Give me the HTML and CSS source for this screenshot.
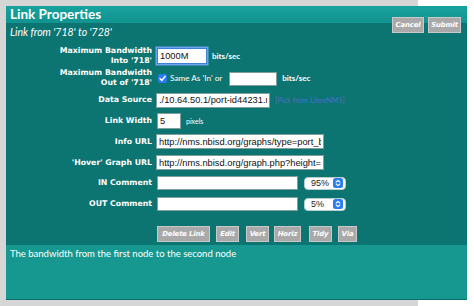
FILE: index.html
```html
<!DOCTYPE html>
<html>
<head>
<meta charset="utf-8">
<link rel="stylesheet" href="styles.css">
</head>
<body>
<div class="backdrop">
  <div class="panel">
    <div class="header">
      <h1 class="title">Link Properties</h1>
      <div class="actions">
        <span class="btn btn-cancel">Cancel</span>
        <span class="btn btn-submit">Submit</span>
      </div>
    </div>
    <div class="body">
      <div class="subtitle">Link from '718' to '728'</div>
      <div class="form">
        <div class="lbl">Maximum Bandwidth<br>Into '718'</div>
        <div class="field"><input class="inp inp-bw focus" type="text" value="1000M"><span class="unit">bits/sec</span></div>

        <div class="lbl">Maximum Bandwidth<br>Out of '718'</div>
        <div class="field">
          <svg class="check" width="9" height="9" viewBox="0 0 9 9"><rect x="0" y="0" width="9" height="9" rx="2" fill="#2a7bf0"/><path d="M2 4.6 L3.8 6.5 L7.2 2.3" fill="none" stroke="#fff" stroke-width="1.4" stroke-linecap="round" stroke-linejoin="round"/></svg>
          <span class="same">Same As 'In' or</span>
          <input class="inp inp-out" type="text" value="">
          <span class="unit">bits/sec</span>
        </div>

        <div class="lbl">Data Source</div>
        <div class="field"><input class="inp inp-ds" type="text" value="./10.64.50.1/port-id44231.rrd"><span class="pick">[Pick from LibreNMS]</span></div>

        <div class="lbl">Link Width</div>
        <div class="field"><input class="inp inp-lw" type="text" value="5"><span class="px">pixels</span></div>

        <div class="lbl">Info URL</div>
        <div class="field"><input class="inp inp-url" type="text" value="http://nms.nbisd.org/graphs/type=port_bits/id=44231/"></div>

        <div class="lbl">'Hover' Graph URL</div>
        <div class="field"><input class="inp inp-url" type="text" value="http://nms.nbisd.org/graph.php?height=100&amp;width=512"></div>

        <div class="lbl">IN Comment</div>
        <div class="field"><input class="inp inp-cm" type="text" value=""><span class="sel"><span class="sel-txt">95%</span><svg class="step" width="10" height="10" viewBox="0 0 10 10"><rect width="10" height="10" rx="2.5" fill="#2b7cf2"/><path d="M3.2 4 L5 2.3 L6.8 4 M3.2 6 L5 7.7 L6.8 6" fill="none" stroke="#fff" stroke-width="1.1" stroke-linecap="round" stroke-linejoin="round"/></svg></span></div>

        <div class="lbl">OUT Comment</div>
        <div class="field"><input class="inp inp-cm" type="text" value=""><span class="sel"><span class="sel-txt">5%</span><svg class="step" width="10" height="10" viewBox="0 0 10 10"><rect width="10" height="10" rx="2.5" fill="#2b7cf2"/><path d="M3.2 4 L5 2.3 L6.8 4 M3.2 6 L5 7.7 L6.8 6" fill="none" stroke="#fff" stroke-width="1.1" stroke-linecap="round" stroke-linejoin="round"/></svg></span></div>
      </div>
      <div class="buttons">
        <span class="btn b-del">Delete Link</span>
        <span class="btn b-edit">Edit</span>
        <span class="btn b-vert">Vert</span>
        <span class="btn b-horiz">Horiz</span>
        <span class="btn b-tidy">Tidy</span>
        <span class="btn b-via">Via</span>
      </div>
    </div>
    <div class="help">The bandwidth from the first node to the second node</div>
  </div>
</div>
</body>
</html>
```

FILE: styles.css
```css
html, body {
  margin: 0;
  padding: 0;
  background: #ffffff;
}
.backdrop {
  width: 418px;
  height: 306px;
  box-sizing: border-box;
  padding: 6px 0 0 6px;
  background: #d6d6d6;
}
.panel {
  width: 461px;
  background: #0c7471;
  color: #fff;
  font-family: Lato, "Liberation Sans", sans-serif;
}
.header {
  height: 17px;
  display: flex;
  justify-content: space-between;
  align-items: flex-start;
  padding: 0 6px 0 4px;
  background: linear-gradient(#17a29e, #11938f);
}
.title {
  margin: 0;
  font-size: 13.5px;
  line-height: 17px;
  font-weight: 700;
  font-family: Lato, "Liberation Sans", sans-serif;
}
.actions {
  display: flex;
  gap: 4px;
  margin-top: 11px;
}
.btn {
  display: inline-flex;
  align-items: center;
  justify-content: center;
  box-sizing: border-box;
  height: 16px;
  background: #a9a9a9;
  border: 1px solid #c9c9c9;
  color: #fff;
  font-family: "DejaVu Sans", sans-serif;
  font-weight: 700;
  font-style: oblique;
  font-size: 6.9px;
  letter-spacing: -0.15px;
}
.btn-cancel { width: 32px; }
.btn-submit { width: 33px; }
.body {
  padding: 3px 0 3px 0;
}
.subtitle {
  padding-left: 4px;
  font-style: italic;
  font-size: 10.5px;
  line-height: 12px;
}
.form {
  margin-top: 7px;
  display: grid;
  grid-template-columns: 146px 1fr;
  grid-template-rows: 22px 22px 22px 20px 21px 21px 20px 22px;
  column-gap: 4px;
  align-items: center;
}
.lbl {
  text-align: right;
  font-family: "DejaVu Sans", sans-serif;
  font-weight: 700;
  font-size: 7.8px;
  line-height: 10px;
}
.field {
  display: flex;
  align-items: center;
}
.inp {
  box-sizing: border-box;
  margin: 0;
  border: 1px solid #7f9e9c;
  background: #fff;
  color: #111;
  font-family: "Liberation Sans", Arial, sans-serif;
  font-size: 9.3px;
  padding: 0 2px;
  outline: none;
}
.inp-bw {
  width: 50px;
  height: 16px;
  margin-left: 1px;
}
.focus {
  border: 1px solid #3b7fd6;
  box-shadow: 0 0 0 1.5px #6aa5ee;
}
.unit {
  margin-left: 5px;
  font-size: 8px;
  font-weight: 700;
}
.check {
  margin-left: 2px;
  margin-top: 1px;
}
.same {
  margin-left: 3px;
  font-size: 8.2px;
}
.inp-out {
  width: 48px;
  height: 14px;
  margin-left: 7px;
  margin-top: 1px;
}
.inp-ds {
  width: 114px;
  height: 15px;
}
.pick {
  margin-left: 5px;
  color: #4a70c4;
  font-size: 7.4px;
}
.inp-lw {
  width: 24px;
  height: 16px;
  margin-left: 1px;
}
.px {
  margin-left: 5px;
  font-size: 7px;
}
.inp-url {
  width: 168px;
  height: 15px;
}
.inp-cm {
  width: 141px;
  height: 14px;
  margin-left: 1px;
}
.sel {
  display: inline-flex;
  align-items: center;
  justify-content: space-between;
  box-sizing: border-box;
  width: 42px;
  height: 13px;
  margin-left: 6px;
  padding: 0 2px 0 6px;
  background: #fff;
  border-radius: 4px;
  border: 1px solid #b9cfcd;
}
.sel-txt {
  color: #222;
  font-family: "Liberation Sans", Arial, sans-serif;
  font-size: 9px;
}
.buttons {
  display: flex;
  gap: 6px;
  margin-top: 11px;
  padding-left: 151px;
}
.b-del { width: 53px; }
.b-edit { width: 23px; }
.b-vert { width: 23px; margin-left: 1px; }
.b-horiz { width: 27px; margin-left: -1px; }
.b-tidy { width: 23px; margin-left: 2px; }
.b-via { width: 19px; }
.help {
  height: 55px;
  box-sizing: border-box;
  padding: 3px 4px 0;
  background: #16978f;
  border-bottom: 1px solid #0b6d69;
  font-size: 9.5px;
  line-height: 12px;
}
```
